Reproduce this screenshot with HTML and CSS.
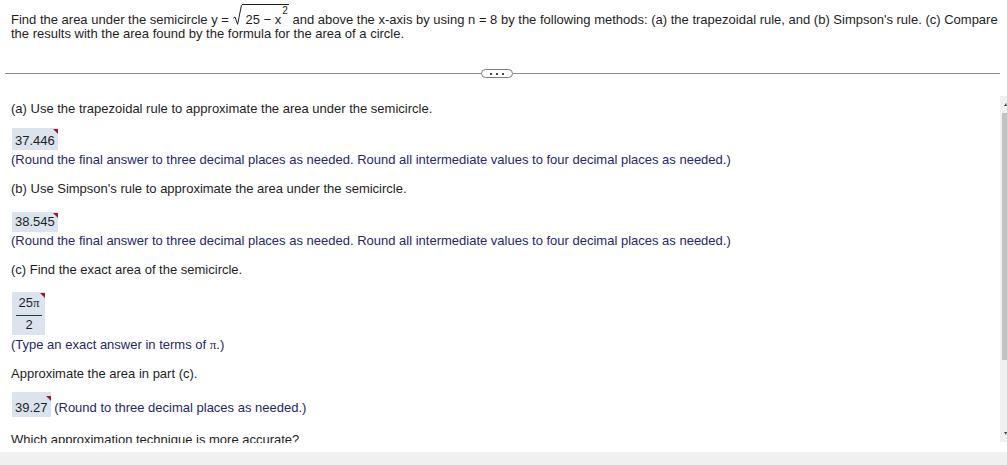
FILE: index.html
```html
<!DOCTYPE html>
<html lang="en">
<head>
<meta charset="utf-8">
<title>Semicircle area</title>
<link rel="stylesheet" href="styles.css">
</head>
<body>
<p class="question">Find the area under the semicircle y = <svg class="rad" width="9" height="20" viewBox="0 0 9 20"><path d="M0.3 13.2 L2 12 L4.6 19.3 L8.4 0.5 L9 0.5" fill="none" stroke="#222" stroke-width="1"/></svg><span class="radicand">25 − x<sup>2</sup></span> and above the x-axis by using n = 8 by the following methods: (a) the trapezoidal rule, and (b) Simpson's rule. (c) Compare the results with the area found by the formula for the area of a circle.</p>

<div class="sep">
  <span class="sep-line"></span>
  <span class="pill"><i></i><i></i><i></i></span>
  <span class="sep-line"></span>
</div>

<div class="scroll">
  <div class="content">
    <p class="txt q-a">(a) Use the trapezoidal rule to approximate the area under the semicircle.</p>
    <div class="ans ans1">37.446</div>
    <p class="txt hint hint1">(Round the final answer to three decimal places as needed. Round all intermediate values to four decimal places as needed.)</p>
    <p class="txt q-b">(b) Use Simpson's rule to approximate the area under the semicircle.</p>
    <div class="ans ans2">38.545</div>
    <p class="txt hint hint2">(Round the final answer to three decimal places as needed. Round all intermediate values to four decimal places as needed.)</p>
    <p class="txt q-c">(c) Find the exact area of the semicircle.</p>
    <div class="ans frac">
      <span class="num">25<span class="pi">π</span></span>
      <span class="bar"></span>
      <span class="den">2</span>
    </div>
    <p class="txt hint hint3">(Type an exact answer in terms of <span class="pi">π</span>.)</p>
    <p class="txt q-d">Approximate the area in part (c).</p>
    <p class="txt row4"><span class="ans ans4">39.27</span> <span class="hint">(Round to three decimal places as needed.)</span></p>
    <p class="txt which">Which approximation technique is more accurate?</p>
  </div>
  <div class="scrollbar">
    <span class="sb-btn up"><b></b></span>
    <span class="thumb"></span>
    <span class="sb-fill"></span>
    <span class="sb-btn down"><b></b></span>
  </div>
</div>

<div class="footer"></div>
</body>
</html>
```

FILE: styles.css
```css
html, body {
  margin: 0;
  padding: 0;
}
body {
  width: 1007px;
  height: 465px;
  overflow: hidden;
  background: #fff;
  font-family: "Liberation Sans", Arial, sans-serif;
  font-size: 13px;
  line-height: 14px;
  color: #1e1e1e;
}

.question {
  margin: 0;
  padding: 5px 4px 0 11px;
}
.rad {
  vertical-align: -1px;
  margin-left: 1px;
}
.radicand {
  border-top: 1px solid #222;
  padding: 7px 1px 0 3px;
}
.radicand sup {
  font-size: 10px;
  line-height: 0;
  vertical-align: 10px;
  margin-left: 1px;
}

.sep {
  margin-top: 28px;
  display: grid;
  grid-template-columns: 476px 32px 1fr;
  align-items: center;
  padding: 0 7px 0 5px;
  height: 9px;
}
.sep-line {
  height: 1px;
  background: #8c8c8c;
}
.pill {
  box-sizing: border-box;
  height: 9px;
  border: 1px solid #7d7d7d;
  border-radius: 5px;
  display: flex;
  justify-content: center;
  align-items: center;
  gap: 4px;
}
.pill i {
  width: 2px;
  height: 2px;
  background: #3e4a66;
}

.scroll {
  margin-top: 18px;
  height: 347px;
  display: flex;
}
.content {
  flex: 1;
  overflow: hidden;
  padding: 6px 0 0 11px;
}
.txt {
  margin: 0;
  white-space: nowrap;
}
.hint {
  color: #27276a;
}
.pi {
  font-family: "Liberation Serif", "Times New Roman", serif;
}

.ans {
  position: relative;
  display: block;
  width: fit-content;
  background: #dbe3ef;
  margin-left: 1px;
  color: #1e1e1e;
}
.ans::after {
  content: "";
  position: absolute;
  top: 1px;
  right: 0;
  border-style: solid;
  border-width: 0 5px 5px 0;
  border-color: transparent #9b1a2e transparent transparent;
}

.ans1 { margin-top: 12px; padding: 6px 3px 2px 3px; }
.hint1 { margin-top: 3px; }
.q-b { margin-top: 15px; }
.ans2 { margin-top: 16px; padding: 3px 3px 3px 3px; }
.hint2 { margin-top: 2px; }
.q-c { margin-top: 15px; }

.frac {
  margin-top: 15px;
  padding: 4px 3px 3px 4px;
  display: flex;
  flex-direction: column;
  align-items: center;
  width: 26px;
}
.frac .num, .frac .den {
  display: block;
  text-align: center;
}
.frac .bar {
  display: block;
  width: 26px;
  height: 1px;
  background: #333;
  margin: 5px 0 2px;
}

.hint3 { margin-top: 3px; }
.q-d { margin-top: 15px; }
.row4 { margin-top: 11px; }
.ans4 {
  display: inline-block;
  padding: 9px 3px 2px 3px;
}
.ans4::after { top: 4px; }
.which { margin-top: 16px; }

.scrollbar {
  width: 7px;
  height: 346px;
  background: #f0f0f0;
  display: flex;
  flex-direction: column;
}
.sb-btn {
  height: 17px;
  display: flex;
  align-items: center;
  justify-content: flex-end;
}
.sb-btn b {
  width: 0;
  height: 0;
  border-style: solid;
}
.sb-btn.up b {
  border-width: 0 1px 3px 2px;
  border-color: transparent transparent #444 transparent;
}
.sb-btn.down b {
  border-width: 3px 1px 0 2px;
  border-color: #444 transparent transparent transparent;
}
.thumb {
  height: 247px;
  margin-left: 2px;
  background: #c2c2c2;
}
.sb-fill {
  flex: 1;
}

.footer {
  margin-top: 9px;
  height: 13px;
  background: #f0f0f0;
}
```
